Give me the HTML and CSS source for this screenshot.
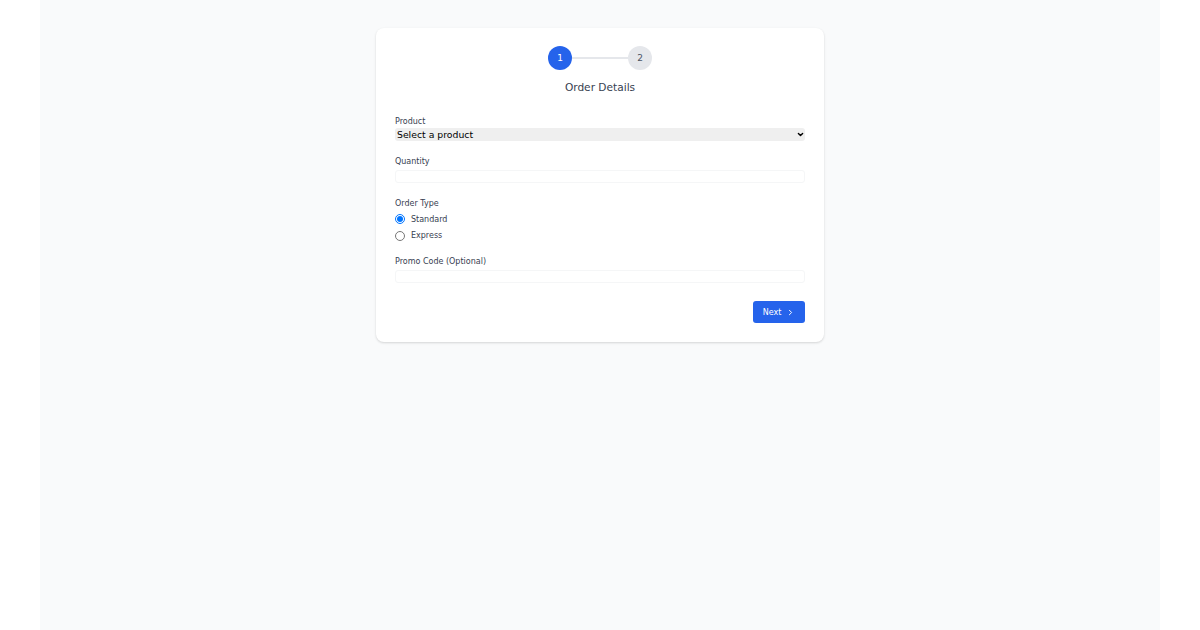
FILE: index.html
```html
<!DOCTYPE html>
<html lang="en">
<head>
<meta charset="utf-8">
<title>Order Details</title>
<link rel="stylesheet" href="styles.css">
</head>
<body>
<div class="page">
  <div class="card">
    <div class="steps">
      <div class="step active">1</div>
      <div class="step-line"></div>
      <div class="step">2</div>
    </div>
    <h2 class="title">Order Details</h2>
    <form class="form">
      <div class="field">
        <label class="label" for="product">Product</label>
        <div class="select-wrap">
          <select id="product" class="select">
            <option>Select a product</option>
          </select>
          <svg class="select-chev" viewBox="0 0 10 10" width="7" height="7" fill="none" stroke="#000" stroke-width="2" stroke-linecap="round" stroke-linejoin="round"><path d="M2 3.5l3 3 3-3"/></svg>
        </div>
      </div>
      <div class="field">
        <label class="label" for="qty">Quantity</label>
        <input id="qty" class="input" type="number">
      </div>
      <div class="field field-radios">
        <span class="label">Order Type</span>
        <label class="radio-row"><input type="radio" name="type" class="radio" checked><span>Standard</span></label>
        <label class="radio-row"><input type="radio" name="type" class="radio"><span>Express</span></label>
      </div>
      <div class="field">
        <label class="label" for="promo">Promo Code (Optional)</label>
        <input id="promo" class="input" type="text">
      </div>
      <div class="actions">
        <button type="button" class="btn">Next
          <svg class="chev" viewBox="0 0 24 24" width="9" height="9" fill="none" stroke="currentColor" stroke-width="2.5" stroke-linecap="round" stroke-linejoin="round"><path d="M9 6l6 6-6 6"/></svg>
        </button>
      </div>
    </form>
  </div>
</div>
</body>
</html>
```
FILE: styles.css
```css
* { box-sizing: border-box; }
html, body { margin: 0; padding: 0; background: #ffffff; }
body { font-family: "DejaVu Sans", sans-serif; color: #374151; }
.page {
  max-width: 1120px;
  margin: 0 auto;
  min-height: 630px;
  background: #f9fafb;
  padding-top: 28px;
}
.card {
  width: 448px;
  margin: 0 auto;
  background: #ffffff;
  border-radius: 8px;
  box-shadow: 0 1px 3px rgba(0,0,0,0.1), 0 1px 2px rgba(0,0,0,0.06);
  padding: 18px 19px 19px;
}
.steps {
  display: flex;
  align-items: center;
  justify-content: center;
}
.step {
  width: 24px;
  height: 24px;
  border-radius: 50%;
  background: #e5e7eb;
  color: #4b5563;
  font-size: 9px;
  display: flex;
  align-items: center;
  justify-content: center;
}
.step.active { background: #2563eb; color: #ffffff; }
.step-line { width: 56px; height: 2px; background: #e5e7eb; }
.title {
  margin: 11px 0 0;
  font-size: 10.6px;
  line-height: 13px;
  font-weight: normal;
  text-align: center;
  color: #374151;
}
.form { margin-top: 23px; display: flex; flex-direction: column; }
.field { display: flex; flex-direction: column; margin-bottom: 16px; }
.field-radios { margin-bottom: 13px; }
.label {
  display: block;
  font-size: 8px;
  line-height: 10px;
  color: #374151;
  margin-bottom: 1px;
}
.select-wrap { position: relative; }
.select {
  display: block;
  height: 13px;
  font-family: "DejaVu Sans", sans-serif;
  font-size: 9.3px;
  padding: 0 2px;
  border: none;
  border-radius: 3px;
  background: #efefef;
  color: #000000;
  width: 100%;
  appearance: none;
  -webkit-appearance: none;
}
.select-chev {
  position: absolute;
  right: 1px;
  top: 3px;
  pointer-events: none;
}
.input {
  height: 13px;
  width: 100%;
  margin-top: 2px;
  border: 1px solid #f5f6f7;
  border-radius: 3px;
  background: #ffffff;
  padding: 0 4px;
  font-size: 8px;
}
.radio-row {
  display: flex;
  align-items: center;
  height: 16.5px;
  font-size: 8px;
  color: #374151;
}
.radio-row:first-of-type { margin-top: 1px; }
.radio { width: 10px; height: 10px; margin: 0 6px 0 0; accent-color: #0075ff; }
.actions { display: flex; justify-content: flex-end; margin-top: 2px; }
.btn {
  width: 52px;
  height: 22px;
  border: none;
  border-radius: 3px;
  background: #2563eb;
  color: #ffffff;
  font-family: "DejaVu Sans", sans-serif;
  font-size: 8px;
  display: flex;
  align-items: center;
  justify-content: center;
  gap: 5px;
  padding: 0;
}
.chev { display: block; }
```
